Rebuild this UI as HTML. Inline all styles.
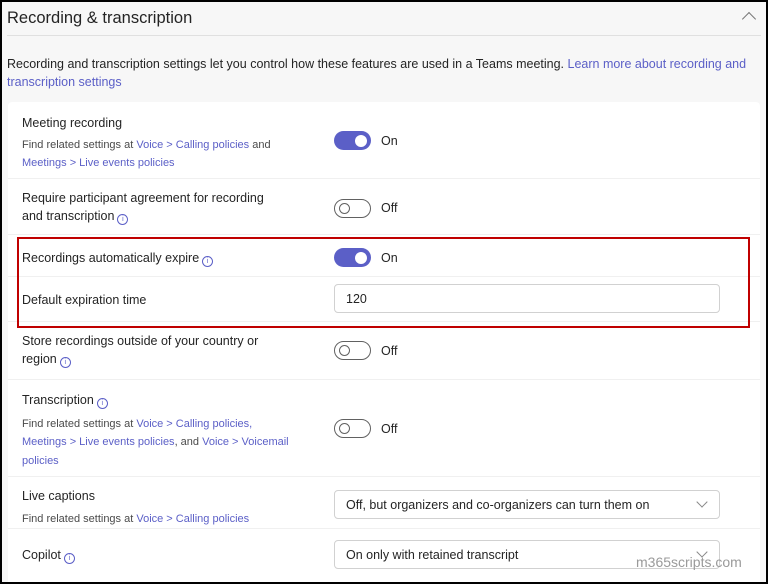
<!DOCTYPE html>
<html><head><style>
*{margin:0;padding:0;box-sizing:border-box}
body{width:768px;height:584px;overflow:hidden;background:#000;font-family:"Liberation Sans",sans-serif;color:#242424;position:relative}
.frame{position:absolute;left:2px;top:2px;width:764px;height:580px;background:#f7f7f7;overflow:hidden}
.a{position:absolute;white-space:nowrap}
.s{font-size:11px;color:#4a4a4a}
.l,.s.l{color:#5b5fc7}
.t{font-size:12.5px}
.card{position:absolute;left:6px;top:100px;width:752px;height:490px;background:#fff;border-radius:4px}
.sep{position:absolute;left:6px;width:752px;height:1px;background:#f0f0f0}
.tg{position:absolute;width:37px;height:19px;border-radius:10px}
.on{background:#5b5fc7}
.on::after{content:"";position:absolute;right:4px;top:3.5px;width:12px;height:12px;border-radius:50%;background:#fff}
.off{border:1px solid #616161;background:#fff}
.off::after{content:"";position:absolute;left:4px;top:3px;width:11px;height:11px;border-radius:50%;border:1px solid #616161;box-sizing:border-box}
.i{display:inline-block;width:11px;height:11px;border:1px solid #5b5fc7;border-radius:50%;font-size:7px;color:#5b5fc7;text-align:center;line-height:9px;vertical-align:-1px;margin-left:3px}
.box{position:absolute;left:332px;width:386px;height:29px;border:1px solid #d1d1d1;border-radius:4px;background:#fff;font-size:12.5px;padding-left:11px;line-height:29px}
.chev{position:absolute;right:13px;top:7px;width:8px;height:8px;border-right:1px solid #888;border-bottom:1px solid #888;transform:rotate(45deg)}
</style></head><body><div class="frame">
<div class="a" style="left:5px;top:7px;font-size:16.5px;color:#242424">Recording &amp; transcription</div>
<div class="a" style="left:742px;top:12px;width:10px;height:10px;border-left:1.5px solid #777;border-top:1.5px solid #777;transform:rotate(45deg)"></div>
<div style="position:absolute;left:5px;top:33px;width:754px;height:1px;background:#e0e0e0"></div>
<div class="a" style="left:5px;top:55px;font-size:12.5px">Recording and transcription settings let you control how these features are used in a Teams meeting. <span class="l">Learn more about recording and</span></div>
<div class="a l" style="left:5px;top:73px;font-size:12.5px">transcription settings</div>
<div class="card"></div>

<div class="a t" style="left:20px;top:114px">Meeting recording</div>
<div class="a s" style="left:20px;top:137px">Find related settings at <span class="l">Voice &gt; Calling policies</span> and</div>
<div class="a s l" style="left:20px;top:155px">Meetings &gt; Live events policies</div>
<div class="tg on" style="left:332px;top:129px"></div><div class="a t" style="left:379px;top:132px">On</div>
<div class="sep" style="top:176px"></div>

<div class="a t" style="left:20px;top:189px">Require participant agreement for recording</div>
<div class="a t" style="left:20px;top:207px">and transcription<span class="i">i</span></div>
<div class="tg off" style="left:332px;top:197px"></div><div class="a t" style="left:379px;top:199px">Off</div>
<div class="sep" style="top:232px"></div>

<div class="a t" style="left:20px;top:249px">Recordings automatically expire<span class="i">i</span></div>
<div class="tg on" style="left:332px;top:246px"></div><div class="a t" style="left:379px;top:249px">On</div>
<div class="sep" style="top:274px"></div>
<div class="a t" style="left:20px;top:291px">Default expiration time</div>
<div class="box" style="top:282px">120</div>
<div class="sep" style="top:319px"></div>
<div style="position:absolute;left:15px;top:235px;width:733px;height:91px;border:2px solid #c00000"></div>

<div class="a t" style="left:20px;top:332px">Store recordings outside of your country or</div>
<div class="a t" style="left:20px;top:350px">region<span class="i">i</span></div>
<div class="tg off" style="left:332px;top:339px"></div><div class="a t" style="left:379px;top:342px">Off</div>
<div class="sep" style="top:377px"></div>

<div class="a t" style="left:20px;top:391px">Transcription<span class="i">i</span></div>
<div class="a s" style="left:20px;top:416px">Find related settings at <span class="l">Voice &gt; Calling policies,</span></div>
<div class="a s" style="left:20px;top:434px"><span class="l">Meetings &gt; Live events policies</span>, and <span class="l">Voice &gt; Voicemail</span></div>
<div class="a s l" style="left:20px;top:453px">policies</div>
<div class="tg off" style="left:332px;top:417px"></div><div class="a t" style="left:379px;top:420px">Off</div>
<div class="sep" style="top:474px"></div>

<div class="a t" style="left:20px;top:487px">Live captions</div>
<div class="a s" style="left:20px;top:511px">Find related settings at <span class="l">Voice &gt; Calling policies</span></div>
<div class="box" style="top:488px">Off, but organizers and co-organizers can turn them on<div class="chev"></div></div>
<div class="sep" style="top:526px"></div>

<div class="a t" style="left:20px;top:546px">Copilot<span class="i">i</span></div>
<div class="box" style="top:538px">On only with retained transcript<div class="chev"></div></div>
<div class="a" style="left:634px;top:552px;font-size:14px;color:#9a9a9a">m365scripts.com</div>
</div></body></html>
